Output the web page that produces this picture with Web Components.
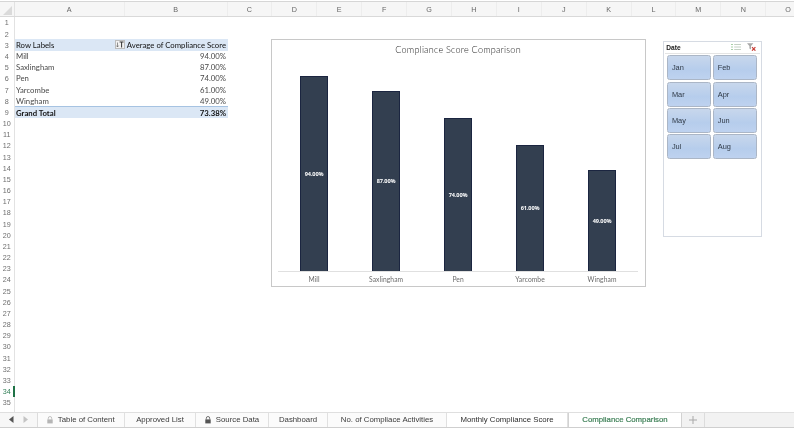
<!DOCTYPE html>
<html><head><meta charset="utf-8">
<style>
html,body{margin:0;padding:0;background:#fff;overflow:hidden}
body{width:794px;height:429px;font-family:"Lato","Liberation Sans",sans-serif}
</style></head><body>
<xl-app></xl-app>
<script>
const def=(n,css,html)=>{customElements.define(n,class extends HTMLElement{
  connectedCallback(){ if(this.shadowRoot)return; const r=this.attachShadow({mode:'open'});
    r.innerHTML=`<style>${css}</style>`+(typeof html==='function'?html(this):html);}
});};

const COLS=[['A',110.5],['B',102.5],['C',44.9],['D',44.9],['E',44.9],['F',44.9],['G',44.9],['H',44.9],['I',44.9],['J',44.9],['K',44.9],['L',44.9],['M',44.9],['N',44.9],['O',44.9]];

def('xl-col-header',`
:host{display:flex;height:16.4px;flex:none;background:#f6f6f6;border-top:1.5px solid #d6d6d6;border-bottom:1px solid #d9d9d9;box-sizing:border-box;font:7.2px "Liberation Sans",sans-serif;color:#666}
.corner{width:14.5px;flex:none;border-right:1px solid #e2e2e2;box-sizing:border-box;display:flex;align-items:flex-end;justify-content:flex-end;padding:0 1.5px 1.5px 0}
.c{flex:none;display:flex;align-items:center;justify-content:center;border-right:1px solid #ededed;box-sizing:border-box}
`,()=>`<div class="corner"><svg width="9" height="9" viewBox="0 0 9 9"><path d="M9 0V9H0Z" fill="#dadada"/></svg></div>`+COLS.map(([n,w])=>`<div class="c" style="width:${w}px">${n}</div>`).join(''));

def('xl-row-header',`
:host{display:flex;flex-direction:column;width:14.5px;flex:none;border-right:1px solid #e2e2e2;box-sizing:border-box;font:7.2px "Liberation Sans",sans-serif;color:#6e6e6e}
div{height:11.18px;flex:none;display:flex;align-items:center;justify-content:center;box-sizing:border-box}
.sel{color:#2f7d55;box-shadow:1px 0 0 #1f7246,inset -1px 0 0 #1f7246}
`,()=>Array.from({length:35},(_,i)=>`<div class="${i==33?'sel':''}">${i+1}</div>`).join(''));

def('xl-pivot',`
:host{display:grid;grid-template-columns:110.5px 102.5px;grid-auto-rows:11.18px;font:7.75px "Lato",sans-serif;color:#4a4a4a;width:213px}
.c{display:flex;align-items:center;padding:0 1.5px;box-sizing:border-box;white-space:nowrap}
.r{justify-content:flex-end}
.h{background:#dbe7f5;color:#111}
.t{background:#dbe7f5;color:#111;font-weight:700;border-top:1px solid #a6c3e2}
.btn{width:10px;height:9px;background:#f2f2f2;border:1px solid #bdbdbd;box-sizing:border-box;margin-left:auto;margin-right:-1.5px;display:flex;align-items:center;justify-content:center;flex:none}
`,()=>{
 const rows=[['Mill','94.00%'],['Saxlingham','87.00%'],['Pen','74.00%'],['Yarcombe','61.00%'],['Wingham','49.00%']];
 return `<div class="c h">Row Labels<span class="btn"><svg width="8" height="7" viewBox="0 0 8 7"><path d="M1.5 1.5V6M.4 4.6 1.5 6l1.1-1.4" fill="none" stroke="#666" stroke-width=".7"/><path d="M3.6 1h4M5.6 1v5.5" fill="none" stroke="#333" stroke-width="1"/></svg></span></div>
 <div class="c h r">Average of Compliance Score</div>`+
 rows.map(([a,b])=>`<div class="c">${a}</div><div class="c r">${b}</div>`).join('')+
 `<div class="c t">Grand Total</div><div class="c t r">73.38%</div>`;
});

def('xl-bar',`
:host{flex:1 1 0;display:flex;flex-direction:column;align-items:center;justify-content:flex-end}
.b{width:28px;background:#333f50;border:1px solid #1b2540;border-bottom:none;box-sizing:border-box;display:flex;align-items:center;justify-content:center;color:#fff;font:700 5.6px "Open Sans",sans-serif;letter-spacing:-.15px}
`,h=>`<div class="b" style="height:${h.getAttribute('h')}px"><slot></slot></div>`);

def('xl-chart',`
:host{position:absolute;left:256.2px;top:21.9px;width:375px;height:248px;box-sizing:border-box;background:#fff;border:1.2px solid #c8c8c8;display:flex;flex-direction:column;padding:0 6.6px 0 6.4px;color:#595959}
.title{font:300 9.1px "Lato",sans-serif;letter-spacing:.22px;text-align:center;height:21px;padding-top:3.5px;box-sizing:border-box;color:#1e1e1e;flex:none}
.plot{flex:none;height:209.5px;display:flex;align-items:stretch;border-bottom:1px solid #e0e0e0}
.x{flex:1;display:flex;font:6.7px "Lato",sans-serif;letter-spacing:.1px;align-items:center;color:#6b6b6b}
.x span{flex:1 1 0;text-align:center}
`,`<div class="title">Compliance Score Comparison</div>
<div class="plot"><slot></slot></div>
<div class="x"><span>Mill</span><span>Saxlingham</span><span>Pen</span><span>Yarcombe</span><span>Wingham</span></div>`);

def('xl-slicer-button',`
:host{display:flex;align-items:center;padding-left:3.6px;box-sizing:border-box;height:25px;border:1px solid #abb6c6;border-radius:2.5px;background:linear-gradient(#c8d7ec,#b6cdec 60%,#bed2ef);font:7.4px "Liberation Sans",sans-serif;color:#2e3845}
`,`<slot></slot>`);

def('xl-slicer',`
:host{position:absolute;left:648.8px;top:23.3px;width:98.4px;height:196.6px;box-sizing:border-box;background:#fff;border:1px solid #d6dbe3;padding:0 4px 0 3px;display:flex;flex-direction:column}
.h{display:flex;align-items:center;height:12px;margin:0 -3px 0 -2px;padding:0 4px 0 1px;border-bottom:1px solid #e4e4e4;font:700 6.6px "Liberation Sans",sans-serif;color:#222;flex:none;box-sizing:border-box}
.h span{flex:1}
.g{display:grid;grid-template-columns:1fr 1fr;gap:1.33px 2.3px;margin-top:1.5px}
svg{display:block}
`,`<div class="h"><span>Date</span>
<svg width="10" height="6" viewBox="0 0 10 6" style="margin-right:6px"><path d="M0 .5h2M0 3h2M0 5.5h2" stroke="#a8cfa8" stroke-width="1" fill="none"/><path d="M3.2 .5H10M3.2 3H10M3.2 5.5H10" stroke="#c4d0c4" stroke-width="1" fill="none"/></svg>
<svg width="9" height="8" viewBox="0 0 9 8"><path d="M0 .3H6.4L4 3V6.6L2.4 5.6V3Z" fill="#a8a8a8"/><path d="M5 4.2 8.4 7.7M8.4 4.2 5 7.7" stroke="#c8413a" stroke-width="1.2" fill="none"/></svg></div>
<div class="g"><slot></slot></div>`);

def('xl-tab',`
:host{display:flex;align-items:center;justify-content:center;flex:none;box-sizing:border-box;height:100%;border-right:1px solid #e0e0e0;font:7.8px "Liberation Sans",sans-serif;color:#3a3a3a;background:#fbfbfb;gap:5px;white-space:nowrap}
:host([bright]){background:#fff;color:#2c2c2c}
:host([active]){background:#fff;color:#3f8058;-webkit-text-stroke:.2px #3f8058;border-left:1px solid #d2d2d2;border-right:1px solid #d2d2d2}
svg{display:block}
`,h=>{
 const l=h.getAttribute('lock');
 const c=l==='light'?'#b5b5b5':'#555';
 return (l?`<svg width="6" height="8" viewBox="0 0 6 8"><path d="M1.3 3.5V2.2a1.7 1.7 0 0 1 3.4 0V3.5" fill="none" stroke="${c}" stroke-width=".8"/><rect x=".3" y="3.4" width="5.4" height="4" fill="${c}"/></svg>`:'')+`<slot></slot>`;
});

def('xl-tabbar',`
:host{display:flex;height:15.5px;margin-bottom:1.5px;flex:none;box-sizing:border-box;background:#f2f2f2;border-top:1px solid #dfdfdf;border-bottom:1.5px solid #cfcfcf;align-items:stretch}
.nav{width:37.5px;flex:none;display:flex;align-items:center;justify-content:center;gap:9px;border-right:1px solid #dcdcdc;box-sizing:border-box;background:#f7f7f7}
.plus{width:23px;flex:none;border-right:1px solid #dcdcdc;box-sizing:border-box;display:flex;align-items:center;justify-content:center}
svg{display:block}
`,`<div class="nav"><svg width="5" height="7" viewBox="0 0 5 7"><path d="M4.5 0V7L0 3.5Z" fill="#555"/></svg><svg width="5" height="7" viewBox="0 0 5 7"><path d="M.5 0V7L5 3.5Z" fill="#c4c4c4"/></svg></div>
<slot></slot>
<div class="plus"><svg width="8" height="8" viewBox="0 0 8 8"><path d="M4 0V8M0 4H8" stroke="#a8a8a8" stroke-width="1"/></svg></div>`);

def('xl-app',`
:host{display:flex;flex-direction:column;width:794px;height:429px;background:#fff;overflow:hidden;box-sizing:border-box;padding-top:1px;filter:blur(.3px)}
.body{flex:1;display:flex;min-height:0}
.cells{flex:1;position:relative;padding-top:22px;box-sizing:border-box}
`,`<xl-col-header></xl-col-header>
<div class="body">
 <xl-row-header></xl-row-header>
 <div class="cells">
  <xl-pivot></xl-pivot>
  <xl-chart>
   <xl-bar h="195">94.00%</xl-bar><xl-bar h="180">87.00%</xl-bar><xl-bar h="153">74.00%</xl-bar><xl-bar h="126">61.00%</xl-bar><xl-bar h="101">49.00%</xl-bar>
  </xl-chart>
  <xl-slicer>
   <xl-slicer-button>Jan</xl-slicer-button><xl-slicer-button>Feb</xl-slicer-button>
   <xl-slicer-button>Mar</xl-slicer-button><xl-slicer-button>Apr</xl-slicer-button>
   <xl-slicer-button>May</xl-slicer-button><xl-slicer-button>Jun</xl-slicer-button>
   <xl-slicer-button>Jul</xl-slicer-button><xl-slicer-button>Aug</xl-slicer-button>
  </xl-slicer>
 </div>
</div>
<xl-tabbar>
 <xl-tab lock="light" style="width:87.5px">Table of Content</xl-tab>
 <xl-tab style="width:71px">Approved List</xl-tab>
 <xl-tab lock="dark" style="width:73px">Source Data</xl-tab>
 <xl-tab style="width:59px">Dashboard</xl-tab>
 <xl-tab style="width:119px">No. of Compliace Activities</xl-tab>
 <xl-tab bright style="width:121px">Monthly Compliance Score</xl-tab>
 <xl-tab active style="width:114px">Compliance Comparison</xl-tab>
</xl-tabbar>`);
</script>
</body></html>
